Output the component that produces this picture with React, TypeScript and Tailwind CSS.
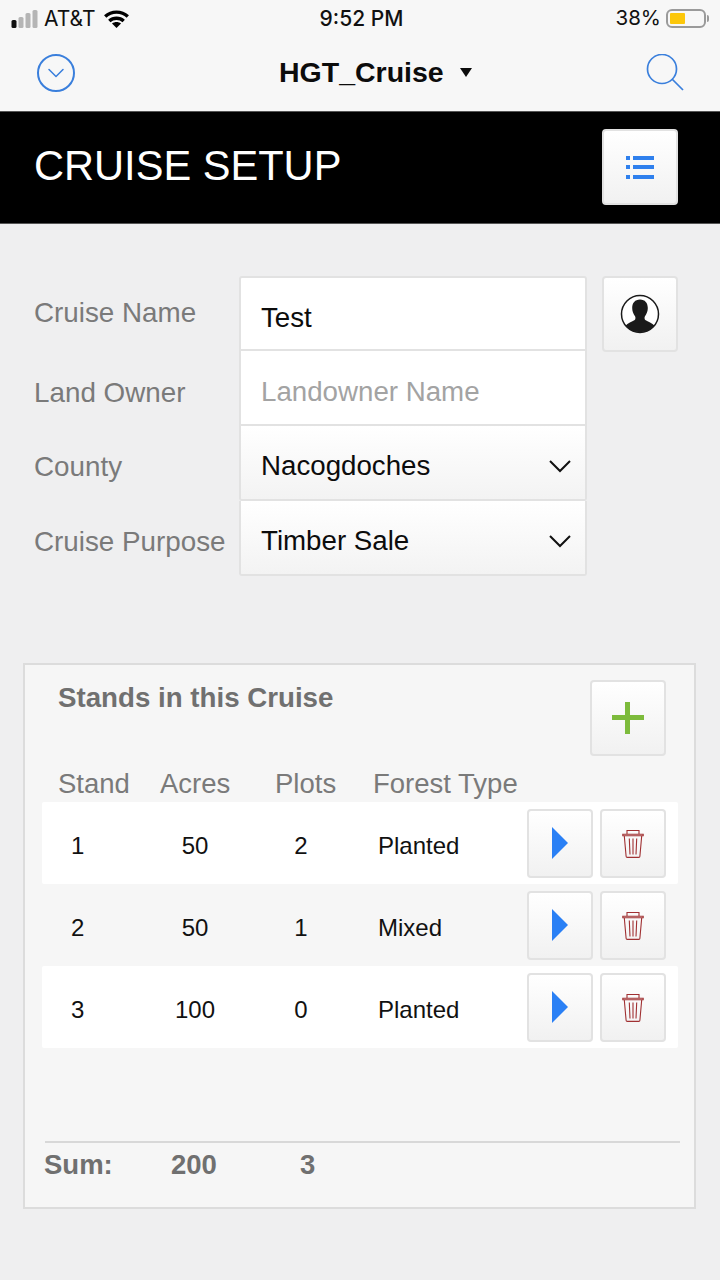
import { ChevronDown } from 'lucide-react'

const stands = [
  { stand: '1', acres: '50', plots: '2', type: 'Planted', striped: true },
  { stand: '2', acres: '50', plots: '1', type: 'Mixed', striped: false },
  { stand: '3', acres: '100', plots: '0', type: 'Planted', striped: true },
]

const squareButton =
  'flex items-center justify-center rounded-[4px] border-2 border-[#e2e2e2] bg-gradient-to-b from-white to-[#f1f1f1]'

function SignalBars() {
  return (
    <svg width="28" height="18" viewBox="0 0 28 18">
      <rect x="0.5" y="10" width="5" height="8" rx="1.5" fill="#111" />
      <rect x="7.5" y="7" width="5" height="11" rx="1.5" fill="#b5b5b5" />
      <rect x="14.5" y="3" width="5" height="15" rx="1.5" fill="#b5b5b5" />
      <rect x="21.5" y="0" width="5" height="18" rx="1.5" fill="#b5b5b5" />
    </svg>
  )
}

function Wifi() {
  return (
    <svg width="25" height="18" viewBox="0 0 25 18" fill="none" stroke="#000" strokeWidth="3.400">
      <path d="M1.200 6.500C7.500.7 17.500.7 23.800 6.500" />
      <path d="M5.300 11C9.300 7.300 15.700 7.300 19.700 11" />
      <path d="M12.500 18l-4.500-4.400c2.500-2 6.500-2 9 0z" fill="#000" stroke="none" />
    </svg>
  )
}

function Battery() {
  return (
    <div className="flex items-center">
      <div className="h-[19px] w-[40px] rounded-[6px] border-2 border-[#9a9a9a] p-[2px]">
        <div className="h-full w-[15px] rounded-[1px] bg-[#fcc70a]" />
      </div>
      <div className="ml-[1px] h-[7px] w-[2px] rounded-r-sm bg-[#9a9a9a]" />
    </div>
  )
}

function TrashIcon() {
  return (
    <svg width="22" height="29" viewBox="0 0 22 29" fill="none" stroke="#a03032" strokeWidth="1.100">
      <path d="M5 5V1.500h12V5" />
      <path d="M.8 5.200h20.400v1.600H.8z" />
      <path d="M2.300 7l1.800 20.200c0 .7.500 1.200 1.200 1.200h11.400c.7 0 1.200-.5 1.200-1.200L19.700 7" />
      <path d="M7.300 9.500l.7 16M11 9.500v16M14.700 9.500l-.7 16" />
    </svg>
  )
}

function UserIcon() {
  return (
    <svg width="40" height="40" viewBox="0 0 40 40">
      <circle cx="20" cy="20" r="18.500" fill="#fff" stroke="#1a1a1a" strokeWidth="1.500" />
      <path
        d="M20 5.500c5 0 7.800 3.500 7.800 8.500 0 3-1 5.800-2.800 8.200-.6.800-.7 2.800.3 3.800 2.700 1.800 7 3.200 9.300 5.700A17.500 17.500 0 0 1 20 38a17.500 17.500 0 0 1-14.600-6.300c2.300-2.500 6.600-3.900 9.300-5.700 1-1 .9-3 .3-3.800-1.800-2.400-2.800-5.200-2.800-8.200 0-5 2.800-8.500 7.800-8.500z"
        fill="#1a1a1a"
      />
    </svg>
  )
}

export default function App() {
  return (
    <div className="h-[1280px] w-[720px] overflow-hidden bg-[#efeff0] font-['Liberation_Sans',sans-serif]">
      <div className="h-[111px] bg-[#f7f7f7]">
        <div className="grid h-[37px] grid-cols-3 items-center pl-[11px] pr-[11px] font-['Inter',sans-serif] text-[21px] text-[#111]">
          <div className="flex items-center">
            <SignalBars />
            <span className="ml-[5px]">AT&amp;T</span>
            <span className="ml-[9px]">
              <Wifi />
            </span>
          </div>
          <div className="pl-[3px] text-center font-medium">9:52 PM</div>
          <div className="flex items-center justify-end gap-[5px]">
            <span className="text-[20.500px]">38%</span>
            <Battery />
          </div>
        </div>
        <div className="flex h-[74px] items-center pb-[2px] pl-[37px] pr-[36px]">
          <div className="flex h-[38px] w-[38px] items-center justify-center rounded-full border-2 border-[#3a7fdc]">
            <ChevronDown size={28} strokeWidth={1.300} className="text-[#3a7fdc]" />
          </div>
          <div className="mb-[2px] ml-[204px] flex items-center text-[28.500px] font-bold text-[#0c0c0c]">
            HGT_Cruise
            <span className="ml-[16px] h-0 w-0 border-x-[6px] border-t-[9px] border-x-transparent border-t-[#0c0c0c]" />
          </div>
          <svg className="ml-auto" width="38" height="38" viewBox="0 0 38 38" fill="none" stroke="#3a7fdc" strokeWidth="1.700">
            <circle cx="16" cy="15" r="14.500" />
            <path d="M26 25l11 11" />
          </svg>
        </div>
      </div>

      <div className="flex h-[113px] items-center justify-between border-y border-[#555] bg-black pb-[2px] pl-[34px] pr-[42px]">
        <h1 className="text-[41.600px] text-white">CRUISE SETUP</h1>
        <div className={`${squareButton} h-[76px] w-[76px] border-[#d9d9d9]`}>
          <svg width="28" height="24" viewBox="0 0 28 24" fill="#2f80ed">
            <rect x="0" y="1" width="4" height="4" />
            <rect x="7" y="1" width="21" height="4" />
            <rect x="0" y="10" width="4" height="4" />
            <rect x="7" y="10" width="21" height="4" />
            <rect x="0" y="20" width="4" height="4" />
            <rect x="7" y="20" width="21" height="4" />
          </svg>
        </div>
      </div>

      <div className="mt-[52px] flex pl-[34px]">
        <div className="w-[205px] text-[27.800px] text-[#7a7a7a]">
          <div className="flex h-[75px] items-center pb-[2px]">Cruise Name</div>
          <div className="flex h-[75px] items-center pt-[8px]">Land Owner</div>
          <div className="flex h-[75px] items-center pt-[7px]">County</div>
          <div className="flex h-[75px] items-center pt-[6px] whitespace-nowrap">Cruise Purpose</div>
        </div>
        <div className="w-[348px] text-[27.700px]">
          <div className="flex h-[75px] items-center rounded-t-[3px] border-2 border-[#e2e2e2] bg-white pl-[20px] pt-[8px] text-[#0c0c0c]">
            Test
          </div>
          <div className="flex h-[75px] items-center border-x-2 border-b-2 border-[#e2e2e2] bg-white pl-[20px] pt-[8px] text-[#a3a3a3]">
            Landowner Name
          </div>
          {['Nacogdoches', 'Timber Sale'].map((value) => (
            <div
              key={value}
              className="flex h-[75px] items-center justify-between rounded-b-[3px] border-x-2 border-b-2 border-[#e2e2e2] bg-gradient-to-b from-white to-[#f3f3f3] pl-[20px] pr-[14px] pt-[7px] text-[#0c0c0c]"
            >
              {value}
              <svg width="22" height="14" viewBox="0 0 22 14" fill="none" stroke="#111" strokeWidth="2">
                <path d="M1 2l10 10L21 2" />
              </svg>
            </div>
          ))}
        </div>
        <div className={`${squareButton} ml-[15px] h-[76px] w-[76px]`}>
          <UserIcon />
        </div>
      </div>

      <section className="ml-[23px] mt-[87px] h-[546px] w-[673px] border-2 border-[#dcdcdc] bg-[#f6f6f6] pl-[17px] pr-[16px]">
        <div className="flex items-start justify-between">
          <h2 className="ml-[16px] mt-[12px] text-[27.700px] font-bold text-[#707070]">Stands in this Cruise</h2>
          <div className={`${squareButton} mr-[12px] mt-[15px] h-[76px] w-[76px]`}>
            <svg width="32" height="32" viewBox="0 0 32 32" fill="#7dbb3c">
              <rect x="13" y="0" width="5" height="32" />
              <rect x="0" y="13" width="32" height="5" />
            </svg>
          </div>
        </div>

        <div className="mt-[9px] flex h-[37px] items-center text-[27.500px] text-[#7a7a7a]">
          <span className="ml-[16px] w-[102px]">Stand</span>
          <span className="w-[115px]">Acres</span>
          <span className="w-[98px]">Plots</span>
          <span>Forest Type</span>
        </div>

        {stands.map((row) => (
          <div
            key={row.stand}
            className={`flex h-[82px] items-center rounded-[2px] text-[24px] text-[#111] ${row.striped ? 'bg-white' : 'bg-transparent'}`}
          >
            <span className="ml-[29px] w-[71px] pt-[6px]">{row.stand}</span>
            <span className="w-[106px] pt-[6px] text-center">{row.acres}</span>
            <span className="w-[106px] pt-[6px] text-center">{row.plots}</span>
            <span className="ml-[24px] w-[149px] pt-[6px]">{row.type}</span>
            <div className={`${squareButton} h-[69px] w-[66px]`}>
              <svg width="18" height="32" viewBox="0 0 18 32" fill="#2a80f5">
                <path d="M1 0l16 16L1 32z" />
              </svg>
            </div>
            <div className={`${squareButton} ml-[7px] h-[69px] w-[66px]`}>
              <TrashIcon />
            </div>
          </div>
        ))}

        <div className="-mr-[2px] ml-[3px] mt-[93px] border-t-2 border-[#d8d8d8]">
          <div className="mt-[1px] flex text-[27.500px] font-bold text-[#707070]">
            <span className="-ml-[1px] w-[127px]">Sum:</span>
            <span className="w-[129px]">200</span>
            <span>3</span>
          </div>
        </div>
      </section>
    </div>
  )
}
